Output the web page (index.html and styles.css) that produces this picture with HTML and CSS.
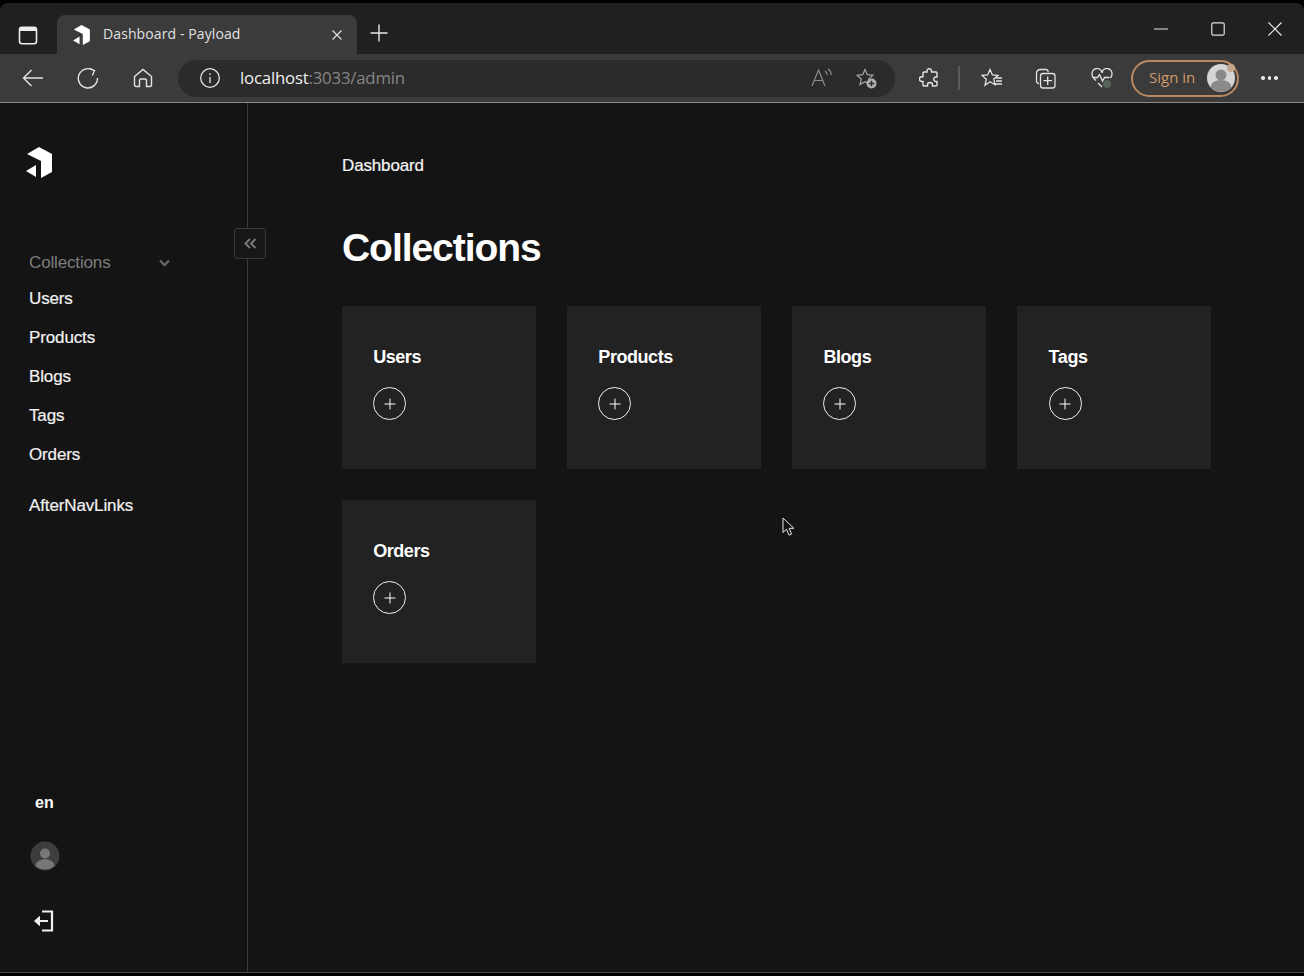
FILE: index.html
```html
<!DOCTYPE html>
<html lang="en">
<head>
<meta charset="utf-8">
<title>Dashboard - Payload</title>
<link rel="stylesheet" href="styles.css">
</head>
<body>
<div class="window">
  <header class="tabbar">
    <button class="tb-btn tabs-btn" aria-label="Tabs">
      <svg width="20" height="19" viewBox="0 0 20 19" fill="none" stroke="#ececec" stroke-width="1.6"><rect x="1.500" y="1.200" width="17" height="16.600" rx="2.500"/><path d="M1.500 3.500h17" stroke-width="3"/></svg>
    </button>
    <div class="tab">
      <svg class="tab-logo" width="17" height="20" viewBox="0 0 26 31"><use href="#logo"/></svg>
      <span class="tab-title">Dashboard - Payload</span>
      <svg class="tab-close" width="12" height="12" viewBox="0 0 12 12" stroke="#e0e0e0" stroke-width="1.2"><path d="M1.500 1.500l9 9M10.500 1.500l-9 9"/></svg>
    </div>
    <svg class="new-tab" width="18" height="18" viewBox="0 0 18 18" stroke="#e8e8e8" stroke-width="1.4"><path d="M9 .5v17M.5 9h17"/></svg>
    <div class="win-controls">
      <svg width="14" height="14" viewBox="0 0 14 14" stroke="#e8e8e8" stroke-width="1.2"><path d="M0 7h14"/></svg>
      <svg width="14" height="14" viewBox="0 0 14 14" fill="none" stroke="#e0e0e0" stroke-width="1.2"><rect x=".8" y=".8" width="12.400" height="12.400" rx="1.500"/></svg>
      <svg width="14" height="14" viewBox="0 0 14 14" stroke="#e8e8e8" stroke-width="1.2"><path d="M.5.5l13 13M13.500.5l-13 13"/></svg>
    </div>
  </header>

  <nav class="toolbar">
    <svg class="tool back" width="22" height="18" viewBox="0 0 22 18" fill="none" stroke="#e4e4e4" stroke-width="1.4"><path d="M21 9H1.500M9.500 1L1.500 9l8 8"/></svg>
    <svg class="tool reload" width="22" height="22" viewBox="0 0 22 22" fill="none" stroke="#e4e4e4" stroke-width="1.4"><path d="M16.500 3.500A9.600 9.600 0 1 0 20.500 11M12.500 1.500l5 2.200-2.200 4.800"/></svg>
    <svg class="tool home" width="20" height="20" viewBox="0 0 20 20" fill="none" stroke="#e4e4e4" stroke-width="1.4"><path d="M1.500 8.500L10 1.500l8.500 7v8.500a1.500 1.500 0 0 1-1.500 1.500h-3.500v-6a1.500 1.500 0 0 0-1.500-1.500H8a1.500 1.500 0 0 0-1.500 1.500v6H3a1.500 1.500 0 0 1-1.500-1.500z"/></svg>
    <div class="address">
      <svg class="info" width="20" height="20" viewBox="0 0 20 20" fill="none" stroke="#e4e4e4" stroke-width="1.3"><circle cx="10" cy="10" r="9.300"/><path d="M10 9v6"/><path d="M10 5.300v1.600"/></svg>
      <span class="url"><span class="host">localhost</span>:3033/admin</span>
      <svg class="read" width="22" height="20" viewBox="0 0 22 20" fill="none" stroke="#8d8d8d" stroke-width="1.2"><path d="M1 18L7.500 2 14 18M3.500 12.500h8M14 3c1.500 1 2.200 2.400 2.200 4M17 1c2.200 1.500 3.200 3.500 3.200 6"/></svg>
      <svg class="fav-add" width="22" height="21" viewBox="0 0 22 21"><path d="M9 1.500l2.300 5.200 5.700.5-4.300 3.700 1.300 5.500L9 13.700 4 16.500l1.300-5.500L1 7.200l5.700-.5z" fill="none" stroke="#a8a8a8" stroke-width="1.2"/><circle cx="15.500" cy="15.500" r="5" fill="#b0b0b0"/><path d="M15.500 12.700v5.600M12.700 15.500h5.600" stroke="#2c2c2c" stroke-width="1.4"/></svg>
    </div>
    <svg class="tool ext" width="20" height="20" viewBox="0 0 20 20" fill="none" stroke="#e4e4e4" stroke-width="1.4"><path d="M8 2.500a2.300 2.300 0 0 1 4.500 0V4h4.500a1 1 0 0 1 1 1v4h-1.500a2.300 2.300 0 0 0 0 4.500H18V17a1 1 0 0 1-1 1h-3.500v-1a2.500 2.500 0 0 0-5 0v1H5a1 1 0 0 1-1-1v-3.500H2.800a2.400 2.400 0 0 1 0-4.800H4V5a1 1 0 0 1 1-1h3z"/></svg>
    <span class="divider"></span>
    <svg class="tool fav" width="22" height="20" viewBox="0 0 22 20" fill="none" stroke="#e4e4e4" stroke-width="1.3"><path d="M9 1.500l2.400 5.400 5.600.5-4.200 3.700 1.200 5.600L9 13.800l-5 3.400 1.300-5.900L1 7.400l5.600-.5z"/><path d="M15 10h6M15 13h6M14 16h7"/></svg>
    <svg class="tool coll" width="21" height="21" viewBox="0 0 21 21" fill="none" stroke="#e4e4e4" stroke-width="1.3"><path d="M4 15.500A2.500 2.500 0 0 1 1.500 13V5A3.500 3.500 0 0 1 5 1.500h6A2 2 0 0 1 13 4"/><rect x="5.500" y="5.500" width="14.500" height="14.500" rx="2.500"/><path d="M12.700 8.500v8.500M8.500 12.700H17"/></svg>
    <svg class="tool health" width="22" height="21" viewBox="0 0 22 21"><path d="M5 12.500C2.500 10.500 1 8.500 1 6a5 5 0 0 1 10-1 5 5 0 0 1 10 1c0 1.500-.5 2.700-1.500 4M1.500 9.500h5l2-3 3 6.500 2-3.500h5M7 15l4 4" fill="none" stroke="#e4e4e4" stroke-width="1.3"/><circle cx="16" cy="16" r="4" fill="#55635a"/></svg>
    <div class="signin">
      <span class="signin-text">Sign in</span>
      <svg class="signin-avatar" width="28" height="30" viewBox="0 0 28 30"><circle cx="14" cy="16" r="14" fill="#d5d5d5"/><circle cx="14" cy="13" r="5.500" fill="#8a8a8a"/><path d="M3.500 25a10.500 7 0 0 1 21 0 14 14 0 0 1-21 0z" fill="#8a8a8a"/><circle cx="24" cy="6" r="4" fill="#c5a78d"/></svg>
    </div>
    <div class="more"><i></i><i></i><i></i></div>
  </nav>

  <div class="app">
    <aside class="sidebar">
      <svg class="logo" width="26" height="31" viewBox="0 0 26 31"><g id="logo" fill="#fff"><path d="M1 7L13 0l13 7v18l-11 6V14z"/><path d="M0 24l10-6v12z"/></g></svg>
      <div class="nav-group">
        <div class="nav-label">Collections
          <svg width="11" height="8" viewBox="0 0 11 8" fill="none" stroke="#666" stroke-width="2.4"><path d="M1 1.500l4.500 4.500L10 1.500"/></svg>
        </div>
        <a class="nav-link">Users</a>
        <a class="nav-link">Products</a>
        <a class="nav-link">Blogs</a>
        <a class="nav-link">Tags</a>
        <a class="nav-link">Orders</a>
      </div>
      <a class="nav-link after">AfterNavLinks</a>
      <div class="side-bottom">
        <span class="lang">en</span>
        <svg class="side-avatar" width="30" height="30" viewBox="0 0 30 30"><circle cx="15" cy="15" r="14.500" fill="#3d3d3d"/><circle cx="15" cy="12.500" r="5" fill="#777"/><path d="M5.500 25c0-9 19-9 19 0a14.500 14.500 0 0 1-19 0z" fill="#777"/></svg>
        <svg class="logout" width="22" height="22" viewBox="0 0 22 22" fill="none" stroke="#f0f0f0" stroke-width="2.2"><path d="M10 1.500h10v19H10M16 11H5"/><path d="M7.500 6.500L2.500 11l5 4.500z" fill="#f0f0f0" stroke-width="1"/></svg>
      </div>
      <button class="collapse" aria-label="Collapse">
        <svg width="13" height="11" viewBox="0 0 13 11" fill="none" stroke="#777" stroke-width="2"><path d="M6 1L1.500 5.500 6 10M11.500 1L7 5.500l4.500 4.500"/></svg>
      </button>
    </aside>
    <main class="main">
      <div class="crumb">Dashboard</div>
      <h1 class="heading">Collections</h1>
      <div class="cards">
        <section class="card"><h3>Users</h3><span class="add"><svg width="12" height="12" viewBox="0 0 12 12" stroke="#fff" stroke-width="1"><path d="M6 .5v11M.5 6h11"/></svg></span></section>
        <section class="card"><h3>Products</h3><span class="add"><svg width="12" height="12" viewBox="0 0 12 12" stroke="#fff" stroke-width="1"><path d="M6 .5v11M.5 6h11"/></svg></span></section>
        <section class="card"><h3>Blogs</h3><span class="add"><svg width="12" height="12" viewBox="0 0 12 12" stroke="#fff" stroke-width="1"><path d="M6 .5v11M.5 6h11"/></svg></span></section>
        <section class="card"><h3>Tags</h3><span class="add"><svg width="12" height="12" viewBox="0 0 12 12" stroke="#fff" stroke-width="1"><path d="M6 .5v11M.5 6h11"/></svg></span></section>
        <section class="card"><h3>Orders</h3><span class="add"><svg width="12" height="12" viewBox="0 0 12 12" stroke="#fff" stroke-width="1"><path d="M6 .5v11M.5 6h11"/></svg></span></section>
      </div>
    </main>
  </div>
  <svg class="cursor" width="13" height="20" viewBox="0 0 13 20"><path d="M1 1v14.500l3.500-3.300 2.500 6 2.600-1.100-2.500-5.800h4.800z" fill="#111" stroke="#e8e8e8" stroke-width="1"/></svg>
</div>
</body>
</html>
```
FILE: styles.css
```css
* { box-sizing: border-box; }
html, body { margin: 0; height: 100%; background: #000; overflow: hidden; }
body { padding-top: 3px; font-family: "Liberation Sans", Arial, sans-serif; color: #fff; }
svg { display: block; flex: none; }
button { background: none; border: 0; padding: 0; }

.window {
  position: relative;
  height: 970px;
  background: #141414;
  border-radius: 8px 8px 0 0;
  display: flex;
  flex-direction: column;
  overflow: hidden;
  border-bottom: 1px solid #4a4a4a;
}

.tabbar {
  height: 51px;
  flex: none;
  background: #202020;
  display: flex;
  align-items: flex-end;
  padding-left: 18px;
}
.tabs-btn { width: 39px; height: 29px; margin-bottom: 4px; }
.tab {
  width: 300px;
  height: 39px;
  background: #3b3b3b;
  border-radius: 8px 8px 0 0;
  display: flex;
  align-items: center;
  padding: 0 14px 0 16px;
  font-family: "Open Sans", "Segoe UI", sans-serif;
  font-size: 14px;
  color: #e0e0e0;
}
.tab-title { margin: 0 0 2px 13px; flex: 1; letter-spacing: .1px; }
.new-tab { margin: 0 0 12px 13px; }
.win-controls {
  margin-left: auto;
  align-self: flex-start;
  margin-top: 19px;
  padding-right: 22px;
  display: flex;
  gap: 43px;
}

.toolbar {
  height: 49px;
  flex: none;
  background: #3b3b3b;
  border-bottom: 1px solid #8a8a8a;
  display: flex;
  align-items: center;
  padding-left: 22px;
}
.reload { margin-left: 33px; }
.home { margin-left: 34px; }
.address {
  margin-left: 25px;
  width: 717px;
  height: 37px;
  border-radius: 19px;
  background: #2b2b2b;
  display: flex;
  align-items: center;
  padding: 0 17px 0 22px;
}
.url {
  margin: 0 0 2px 20px;
  flex: 1;
  font-family: "Open Sans", sans-serif;
  font-size: 16.800px;
  color: #868686;
  letter-spacing: -.2px;
}
.host { color: #f0f0f0; }
.fav-add { margin-left: 23px; }
.ext { margin-left: 24px; }
.divider { width: 2px; height: 24px; background: #5c5c5c; margin-left: 19px; }
.fav { margin-left: 21px; }
.coll { margin-left: 32px; }
.health { margin-left: 35px; }
.signin {
  margin-left: 18px;
  width: 108px;
  height: 37px;
  border: 2px solid #b98a62;
  border-radius: 19px;
  display: flex;
  align-items: center;
  padding-left: 16px;
  font-family: "Open Sans", sans-serif;
  font-size: 15px;
  color: #d09a6a;
}
.signin-avatar { margin: -2px 0 0 12px; }
.signin-text { white-space: nowrap; margin-bottom: 2px; }
.more { margin-left: 22px; display: flex; gap: 3px; }
.more i { width: 3.500px; height: 3.500px; border-radius: 50%; background: #e8e8e8; }

.app { flex: 1; display: flex; min-height: 0; }
.sidebar {
  position: relative;
  width: 248px;
  flex: none;
  border-right: 1px solid #3a3a3a;
  padding: 44px 0 0 29px;
  display: flex;
  flex-direction: column;
}
.logo { margin-left: -3px; }
.nav-group { margin-top: 74px; display: flex; flex-direction: column; }
.nav-label {
  width: 141px;
  height: 21px;
  display: flex;
  align-items: center;
  justify-content: space-between;
  font-size: 17px;
  letter-spacing: -.15px;
  color: #7d7d7d;
  margin-bottom: 6px;
}
.nav-link {
  height: 39px;
  display: flex;
  align-items: center;
  font-size: 17px;
  letter-spacing: -.13px;
  color: #f2f2f2;
  -webkit-text-stroke: .2px #f2f2f2;
}
.after { margin-top: 12px; }
.side-bottom {
  margin-top: auto;
  padding: 0 0 40px 1px;
  display: flex;
  flex-direction: column;
  align-items: flex-start;
}
.lang { margin-left: 5px; font-size: 16px; font-weight: 700; }
.side-avatar { margin-top: 29px; }
.logout { margin: 39px 0 0 2px; }
.collapse {
  position: absolute;
  left: 234px;
  top: 125px;
  width: 32px;
  height: 31px;
  background: #171717;
  border: 1px solid #3a3a3a;
  border-radius: 3px;
  display: flex;
  align-items: center;
  justify-content: center;
}

.main { flex: 1; padding: 53px 0 0 94px; }
.crumb { font-size: 17px; letter-spacing: -.15px; line-height: 20px; color: #f5f5f5; -webkit-text-stroke: .2px #f5f5f5; }
.heading {
  margin: 49px 0 0;
  font-size: 39px;
  line-height: 46px;
  font-weight: 700;
  letter-spacing: -1.050px;
}
.cards {
  margin-top: 35px;
  display: grid;
  grid-template-columns: repeat(4, 194px);
  grid-auto-rows: 163px;
  gap: 31px 31.150px;
}
.card { background: #222; padding: 40px 31.200px 0; }
.card h3 { margin: 0; font-size: 18px; line-height: 22px; font-weight: 700; letter-spacing: -.45px; }
.add {
  margin-top: 19px;
  width: 33px;
  height: 33px;
  border: 1px solid #f0f0f0;
  border-radius: 50%;
  display: flex;
  align-items: center;
  justify-content: center;
}
.cursor { position: absolute; left: 782px; top: 514px; }
```
